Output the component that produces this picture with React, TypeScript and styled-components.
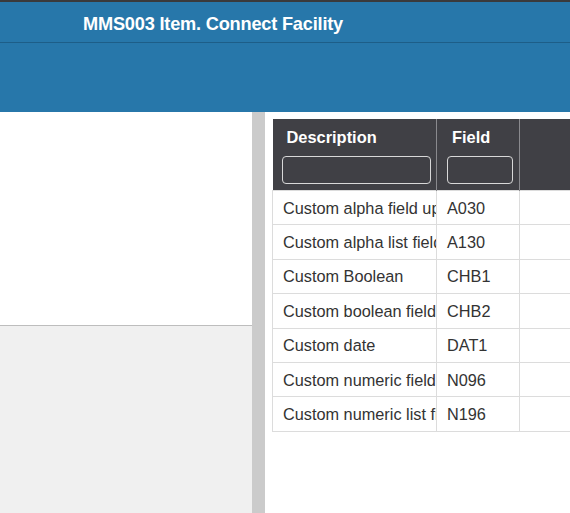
import React from "react";
import styled, { createGlobalStyle } from "styled-components";

const Global = createGlobalStyle`
  html, body { margin: 0; padding: 0; height: 100%; overflow: hidden; }
  body { font-family: "Liberation Sans", Arial, sans-serif; }
  #root { height: 100%; }
  * { box-sizing: border-box; }
`;

const Page = styled.div`
  height: 100vh;
  display: flex;
  flex-direction: column;
  border-top: 2px solid #3a3a3c;
`;

const TitleBar = styled.div`
  height: 41px;
  background: #2777aa;
  border-bottom: 1px solid #1d5e88;
  display: flex;
  align-items: center;
  padding: 4px 0 0 83px;
  color: #fff;
  font-weight: bold;
  font-size: 18.2px;
  letter-spacing: -0.2px;
`;

const ToolBar = styled.div`
  height: 69px;
  background: #2777aa;
`;

const Main = styled.div`
  flex: 1;
  display: flex;
  min-height: 0;
`;

const LeftPanel = styled.div`
  width: 252px;
  display: flex;
  flex-direction: column;
`;

const LeftTop = styled.div`
  height: 214px;
  background: #fff;
  border-bottom: 1px solid #bdbdbd;
`;

const LeftBottom = styled.div`
  flex: 1;
  background: #f0f0f0;
`;

const Splitter = styled.div`
  width: 13px;
  background: #cbcbcb;
`;

const RightPanel = styled.div`
  flex: 1;
  background: #fff;
  padding: 7px 0 0 7px;
  overflow: hidden;
`;

const Table = styled.table`
  border-collapse: collapse;
  table-layout: fixed;
  width: 400px;
`;

const HeadCell = styled.th<{ $w: number }>`
  width: ${(p) => p.$w}px;
  background: #404045;
  color: #fff;
  text-align: left;
  vertical-align: top;
  padding: 9px 4px 6px 9px;
  font-size: 16.4px;
  font-weight: bold;
  border-left: 1px solid #8a8a8e;
  height: 71px;
  &:first-child { border-left: none; }
  &:nth-child(2) { padding-left: 10px; }
`;

const HeadLabel = styled.div`
  height: 19px;
  line-height: 19px;
  padding-left: 5px;
  margin-bottom: 9px;
`;

const FilterInput = styled.div<{ $w: number }>`
  width: ${(p) => p.$w}px;
  height: 28px;
  border: 1px solid #d8d8d8;
  border-radius: 4px;
`;

const Cell = styled.td`
  height: 34.4px;
  padding: 1px 0 0 10px;
  font-size: 16.3px;
  color: #333;
  border: 1px solid #dcdcdc;
  white-space: nowrap;
  overflow: hidden;
  text-overflow: clip;
`;

const rows: [string, string][] = [
  ["Custom alpha field upper case", "A030"],
  ["Custom alpha list field", "A130"],
  ["Custom Boolean", "CHB1"],
  ["Custom boolean field", "CHB2"],
  ["Custom date", "DAT1"],
  ["Custom numeric field", "N096"],
  ["Custom numeric list field", "N196"],
];

export default function App() {
  return (
    <>
      <Global />
      <Page>
        <TitleBar>MMS003 Item. Connect Facility</TitleBar>
        <ToolBar />
        <Main>
          <LeftPanel>
            <LeftTop />
            <LeftBottom />
          </LeftPanel>
          <Splitter />
          <RightPanel>
            <Table>
              <thead>
                <tr>
                  <HeadCell $w={164}>
                    <HeadLabel>Description</HeadLabel>
                    <FilterInput $w={149} />
                  </HeadCell>
                  <HeadCell $w={83}>
                    <HeadLabel>Field</HeadLabel>
                    <FilterInput $w={66} />
                  </HeadCell>
                  <HeadCell $w={153} />
                </tr>
              </thead>
              <tbody>
                {rows.map(([d, f]) => (
                  <tr key={f}>
                    <Cell>{d}</Cell>
                    <Cell>{f}</Cell>
                    <Cell />
                  </tr>
                ))}
              </tbody>
            </Table>
          </RightPanel>
        </Main>
      </Page>
    </>
  );
}
